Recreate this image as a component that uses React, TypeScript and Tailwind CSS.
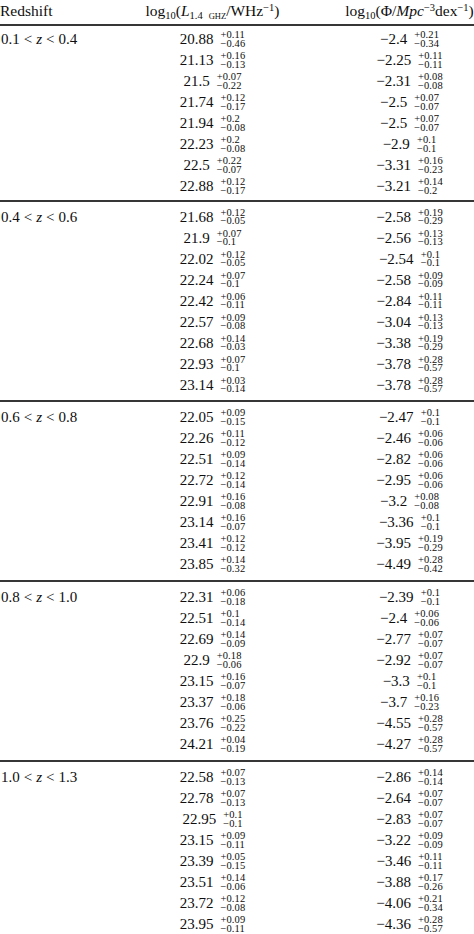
import React from "react";

type Section = { lo: string; hi: string; pad: string; rows: string[] };

const sections: Section[] = [
  {
    lo: "0.1",
    hi: "0.4",
    pad: "pt-[3px] pb-[3px]",
    rows: [
      "20.88 +0.11 −0.46|−2.4 +0.21 −0.34",
      "21.13 +0.16 −0.13|−2.25 +0.11 −0.11",
      "21.5 +0.07 −0.22|−2.31 +0.08 −0.08",
      "21.74 +0.12 −0.17|−2.5 +0.07 −0.07",
      "21.94 +0.2 −0.08|−2.5 +0.07 −0.07",
      "22.23 +0.2 −0.08|−2.9 +0.1 −0.1",
      "22.5 +0.22 −0.07|−3.31 +0.16 −0.23",
      "22.88 +0.12 −0.17|−3.21 +0.14 −0.2",
    ],
  },
  {
    lo: "0.4",
    hi: "0.6",
    pad: "pt-[4.5px] pb-[4.5px]",
    rows: [
      "21.68 +0.12 −0.05|−2.58 +0.19 −0.29",
      "21.9 +0.07 −0.1|−2.56 +0.13 −0.13",
      "22.02 +0.12 −0.05|−2.54 +0.1 −0.1",
      "22.24 +0.07 −0.1|−2.58 +0.09 −0.09",
      "22.42 +0.06 −0.11|−2.84 +0.11 −0.11",
      "22.57 +0.09 −0.08|−3.04 +0.13 −0.13",
      "22.68 +0.14 −0.03|−3.38 +0.19 −0.29",
      "22.93 +0.07 −0.1|−3.78 +0.28 −0.57",
      "23.14 +0.03 −0.14|−3.78 +0.28 −0.57",
    ],
  },
  {
    lo: "0.6",
    hi: "0.8",
    pad: "pt-[5px] pb-[5px]",
    rows: [
      "22.05 +0.09 −0.15|−2.47 +0.1 −0.1",
      "22.26 +0.11 −0.12|−2.46 +0.06 −0.06",
      "22.51 +0.09 −0.14|−2.82 +0.06 −0.06",
      "22.72 +0.12 −0.14|−2.95 +0.06 −0.06",
      "22.91 +0.16 −0.08|−3.2 +0.08 −0.08",
      "23.14 +0.16 −0.07|−3.36 +0.1 −0.1",
      "23.41 +0.12 −0.12|−3.95 +0.19 −0.29",
      "23.85 +0.14 −0.32|−4.49 +0.28 −0.42",
    ],
  },
  {
    lo: "0.8",
    hi: "1.0",
    pad: "pt-[5px] pb-[5px]",
    rows: [
      "22.31 +0.06 −0.18|−2.39 +0.1 −0.1",
      "22.51 +0.1 −0.14|−2.4 +0.06 −0.06",
      "22.69 +0.14 −0.09|−2.77 +0.07 −0.07",
      "22.9 +0.18 −0.06|−2.92 +0.07 −0.07",
      "23.15 +0.16 −0.07|−3.3 +0.1 −0.1",
      "23.37 +0.18 −0.06|−3.7 +0.16 −0.23",
      "23.76 +0.25 −0.22|−4.55 +0.28 −0.57",
      "24.21 +0.04 −0.19|−4.27 +0.28 −0.57",
    ],
  },
  {
    lo: "1.0",
    hi: "1.3",
    pad: "pt-[5px] pb-[5px]",
    rows: [
      "22.58 +0.07 −0.13|−2.86 +0.14 −0.14",
      "22.78 +0.07 −0.13|−2.64 +0.07 −0.07",
      "22.95 +0.1 −0.1|−2.83 +0.07 −0.07",
      "23.15 +0.09 −0.11|−3.22 +0.09 −0.09",
      "23.39 +0.05 −0.15|−3.46 +0.11 −0.11",
      "23.51 +0.14 −0.06|−3.88 +0.17 −0.26",
      "23.72 +0.12 −0.08|−4.06 +0.21 −0.34",
      "23.95 +0.09 −0.11|−4.36 +0.28 −0.57",
    ],
  },
];

function Val({ v }: { v: string }) {
  const [n, p, m] = v.split(" ");
  return (
    <div className="flex items-center justify-center gap-[7px]">
      <span className="text-[15px] leading-none">{n}</span>
      <span className="flex flex-col text-[10.5px] leading-[8.5px] tracking-[0.1px]">
        <span>{p}</span>
        <span>{m}</span>
      </span>
    </div>
  );
}

function Rule() {
  return <div className="h-[2px] bg-[#363636]" />;
}

export default function App() {
  return (
    <div className="w-[474px] h-[934px] overflow-hidden bg-white text-[#0e0e0e] font-['Liberation_Serif',serif]">
      <div className="w-[514px]">
        <div className="grid grid-cols-[120px_185px_209px] h-[24px] text-[15.5px] leading-[21px]">
          <div className="whitespace-nowrap">Redshift</div>
          <div className="text-center whitespace-nowrap">
            log<sub className="text-[10.5px]">10</sub>(<i>L</i>
            <sub className="text-[10.5px]">
              1.4<span className="ml-[6px] text-[8.5px]">GHZ</span>
            </sub>
            /WHz<sup className="text-[10.5px]">−1</sup>)
          </div>
          <div className="text-center whitespace-nowrap">
            log<sub className="text-[10.5px]">10</sub>(Φ/<i>Mpc</i>
            <sup className="text-[10.5px]">−3</sup>dex
            <sup className="text-[10.5px]">−1</sup>)
          </div>
        </div>
        <Rule />
        {sections.map((s, si) => (
          <div key={si}>
            <div className={s.pad}>
              {s.rows.map((r, ri) => {
                const [a, b] = r.split("|");
                return (
                  <div
                    key={ri}
                    className="grid grid-cols-[120px_185px_209px] h-[21px] items-center"
                  >
                    <div className="flex items-center text-[15px] leading-none whitespace-nowrap pl-[1px]">
                      {ri === 0 ? (
                        <>
                          <span>{s.lo}</span>
                          <span className="mx-[4px]">&lt;</span>
                          <i>z</i>
                          <span className="mx-[4px]">&lt;</span>
                          <span>{s.hi}</span>
                        </>
                      ) : null}
                    </div>
                    <Val v={a} />
                    <Val v={b} />
                  </div>
                );
              })}
            </div>
            {si < sections.length - 1 ? <Rule /> : null}
          </div>
        ))}
      </div>
    </div>
  );
}
